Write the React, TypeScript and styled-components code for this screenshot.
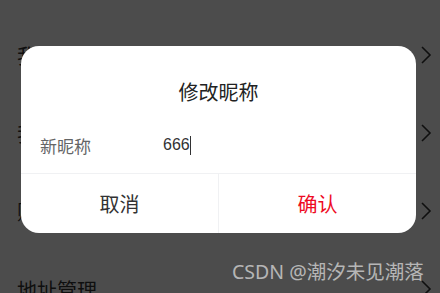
import styled, { createGlobalStyle } from "styled-components";

const GlobalStyle = createGlobalStyle`
    html, body {
        margin: 0;
        padding: 0;
        background: #ffffff;
    }
    body {
        font-family: "Noto Sans", "Noto Sans CJK SC", sans-serif;
        overflow: hidden;
    }
`;

const items = ["我的头像", "我的昵称", "账户安全", "地址管理"];

function Chevron() {
    return (
        <svg width="12" height="20" viewBox="0 0 12 20" fill="none">
            <path d="M2 2 L10 10 L2 18" stroke="#333" strokeWidth="1.6" />
        </svg>
    );
}

export default function App() {
    return (
        <Page>
            <GlobalStyle />
            <List>
                {items.map((t) => (
                    <Row key={t}>
                        <span>{t}</span>
                        <Chevron />
                    </Row>
                ))}
            </List>
            <Overlay>
                <Dialog>
                    <Title>修改昵称</Title>
                    <Field>
                        <Label>新昵称</Label>
                        <Value>
                            666<Caret />
                        </Value>
                    </Field>
                    <Footer>
                        <Btn>取消</Btn>
                        <Btn $confirm>确认</Btn>
                    </Footer>
                </Dialog>
            </Overlay>
            <Watermark>CSDN @潮汐未见潮落</Watermark>
        </Page>
    );
}

const Page = styled.div`
    position: relative;
    width: 440px;
    height: 293px;
    overflow: hidden;
`;

const List = styled.div`
    display: flex;
    flex-direction: column;
    padding-top: 16px;
`;

const Row = styled.div`
    height: 78px;
    display: flex;
    align-items: center;
    justify-content: space-between;
    padding: 0 8px 0 17px;
    font-size: 20px;
    color: #333;
`;

const Overlay = styled.div`
    position: absolute;
    inset: 0;
    background: rgba(0, 0, 0, 0.7);
    display: flex;
    align-items: flex-start;
    padding: 46px 0 0 21px;
`;

const Dialog = styled.div`
    width: 395px;
    background: #fff;
    border-radius: 18px;
    overflow: hidden;
    display: flex;
    flex-direction: column;
`;

const Title = styled.div`
    margin-top: 34px;
    text-align: center;
    font-size: 20px;
    line-height: 26px;
    color: #222;
`;

const Field = styled.div`
    display: flex;
    align-items: center;
    height: 40px;
    margin: 19px 0 8px;
    padding: 0 19px;
    font-size: 17px;
`;

const Label = styled.div`
    width: 123px;
    color: #646566;
`;

const Value = styled.div`
    display: flex;
    align-items: center;
    color: #323233;
    font-size: 16px;
    font-family: "Liberation Sans", Arial, sans-serif;
`;

const Caret = styled.span`
    display: inline-block;
    width: 1px;
    height: 19px;
    background: #323233;
`;

const Footer = styled.div`
    display: flex;
    border-top: 1px solid #f0f1f3;
`;

const Btn = styled.div<{ $confirm?: boolean }>`
    flex: 1;
    height: 59px;
    display: flex;
    align-items: center;
    justify-content: center;
    font-size: 20px;
    color: ${(p) => (p.$confirm ? "#ee0a24" : "#323233")};
    & + & {
        border-left: 1px solid #f0f1f3;
    }
`;

const Watermark = styled.div`
    position: absolute;
    left: 232px;
    top: 258px;
    font-size: 19.5px;
    line-height: 28px;
    color: rgba(255, 255, 255, 0.6);
    white-space: nowrap;
`;
